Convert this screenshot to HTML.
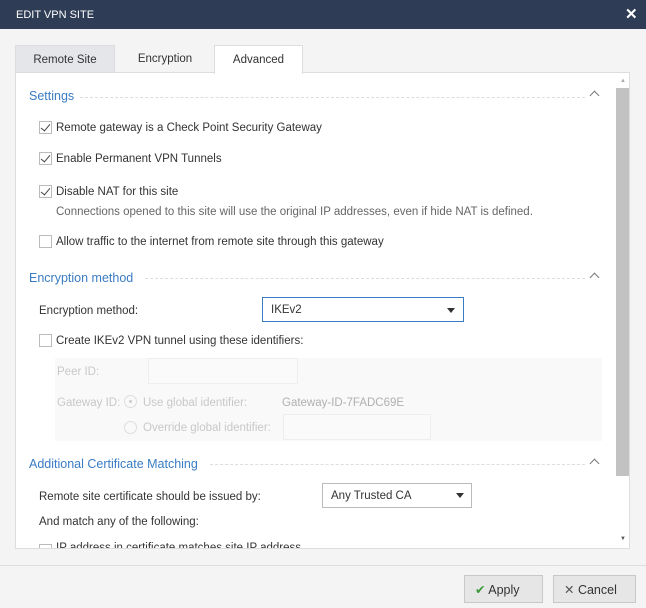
<!DOCTYPE html>
<html><head><style>
*{box-sizing:border-box;margin:0;padding:0}
body{width:646px;height:608px;overflow:hidden;background:#f4f4f4;font-family:"Liberation Sans",sans-serif;font-size:11.5px;color:#333;position:relative}
.a{position:absolute;white-space:nowrap}
.hdr{left:0;top:0;width:646px;height:29px;background:#2e3d55;color:#fff;font-size:11px;padding:9px 0 0 16px}
.tab{top:45px;height:28px;padding-top:8px;text-align:center;font-size:11.5px}
.panel{left:15px;top:72px;width:615px;height:477px;background:#fff;border:1px solid #ddd}
.sec{color:#3a7cc4;font-size:12.5px}
.dash{height:0;border-top:1px dashed #ddd}
.cb{width:13px;height:13px;border:1px solid #bbb;background:#fff}
.cb.c::after{content:"";position:absolute;left:3px;top:0px;width:4px;height:8px;border:solid #444;border-width:0 1.5px 1.5px 0;transform:rotate(40deg)}
.car{width:7px;height:7px;border:solid #777;border-width:1px 1px 0 0;transform:rotate(-45deg)}
.dis{color:#c8c8c8}
.sel{background:#fff;border:1px solid #bbb;padding:6px 0 0 8px;height:23px}
.tri{width:0;height:0;border-left:4.5px solid transparent;border-right:4.5px solid transparent;border-top:5px solid #333}
.btn{top:575px;height:28px;background:#e6e6e6;border:1px solid #c8c8c8;font-size:12.5px;padding-top:6px}
</style></head><body>
<div class="a hdr">EDIT VPN SITE</div>
<div class="a" style="left:625px;top:5px;color:#fff;font-size:15px;font-weight:bold">✕</div>
<div class="a panel"></div>
<div class="a tab" style="left:15px;width:100px;background:#e4e6ea;border:1px solid #dcdcdc">Remote Site</div>
<div class="a tab" style="left:116px;width:98px">Encryption</div>
<div class="a tab" style="left:214px;width:89px;background:#fff;border:1px solid #ddd;border-bottom:none;height:29px">Advanced</div>
<div class="a" style="left:616px;top:88px;width:13px;height:388px;background:#c2c2c2"></div>
<div class="a" style="left:620px;top:78px;font-size:6px;color:#aaa">▲</div>
<div class="a" style="left:620px;top:536px;font-size:6px;color:#555">▼</div>

<div class="a sec" style="left:29px;top:89px">Settings</div>
<div class="a dash" style="left:80px;top:97px;width:505px"></div>
<div class="a car" style="left:591px;top:92px"></div>
<div class="a cb c" style="left:39px;top:121px"></div><div class="a" style="left:56px;top:122px">Remote gateway is a Check Point Security Gateway</div>
<div class="a cb c" style="left:39px;top:152px"></div><div class="a" style="left:56px;top:153px">Enable Permanent VPN Tunnels</div>
<div class="a cb c" style="left:39px;top:185px"></div><div class="a" style="left:56px;top:186px">Disable NAT for this site</div>
<div class="a" style="left:56px;top:206px;color:#666">Connections opened to this site will use the original IP addresses, even if hide NAT is defined.</div>
<div class="a cb" style="left:39px;top:235px"></div><div class="a" style="left:56px;top:236px">Allow traffic to the internet from remote site through this gateway</div>

<div class="a sec" style="left:29px;top:271px">Encryption method</div>
<div class="a dash" style="left:145px;top:278px;width:440px"></div>
<div class="a car" style="left:591px;top:274px"></div>
<div class="a" style="left:39px;top:305px">Encryption method:</div>
<div class="a sel" style="left:262px;top:297px;width:202px;height:25px;border-color:#3a7cc4">IKEv2</div>
<div class="a tri" style="left:447px;top:308px"></div>
<div class="a cb" style="left:39px;top:334px"></div><div class="a" style="left:56px;top:335px">Create IKEv2 VPN tunnel using these identifiers:</div>
<div class="a" style="left:55px;top:358px;width:547px;height:83px;background:#f9f9f9"></div>
<div class="a dis" style="left:57px;top:366px">Peer ID:</div>
<div class="a" style="left:148px;top:358px;width:150px;height:26px;border:1px solid #eee;background:#fafafa"></div>
<div class="a dis" style="left:57px;top:397px">Gateway ID:</div>
<div class="a" style="left:124px;top:395px;width:13px;height:13px;border:1px solid #ddd;border-radius:50%"></div>
<div class="a" style="left:129px;top:400px;width:3px;height:3px;background:#ccc;border-radius:50%"></div>
<div class="a dis" style="left:143px;top:397px">Use global identifier:</div>
<div class="a dis" style="left:282px;top:397px;color:#b0b0b0">Gateway-ID-7FADC69E</div>
<div class="a" style="left:124px;top:421px;width:13px;height:13px;border:1px solid #ddd;border-radius:50%"></div>
<div class="a dis" style="left:143px;top:422px">Override global identifier:</div>
<div class="a" style="left:283px;top:414px;width:148px;height:26px;border:1px solid #eee;background:#fafafa"></div>

<div class="a sec" style="left:29px;top:457px">Additional Certificate Matching</div>
<div class="a dash" style="left:210px;top:464px;width:375px"></div>
<div class="a car" style="left:591px;top:460px"></div>
<div class="a" style="left:39px;top:491px">Remote site certificate should be issued by:</div>
<div class="a sel" style="left:322px;top:483px;width:150px;height:25px">Any Trusted CA</div>
<div class="a tri" style="left:456px;top:493px"></div>
<div class="a" style="left:39px;top:516px">And match any of the following:</div>
<div class="a" style="left:16px;top:540px;width:599px;height:8px;overflow:hidden"><div class="a cb" style="left:23px;top:4px"></div><div class="a" style="left:40px;top:2px">IP address in certificate matches site IP address</div></div>

<div class="a" style="left:0;top:565px;width:646px;border-top:1px solid #ddd"></div>
<div class="a btn" style="left:464px;width:79px;padding-left:10px"><span style="color:#3a9a3a">✔</span> Apply</div>
<div class="a btn" style="left:553px;width:83px;padding-left:10px"><span style="color:#555">✕</span> Cancel</div>
</body></html>
